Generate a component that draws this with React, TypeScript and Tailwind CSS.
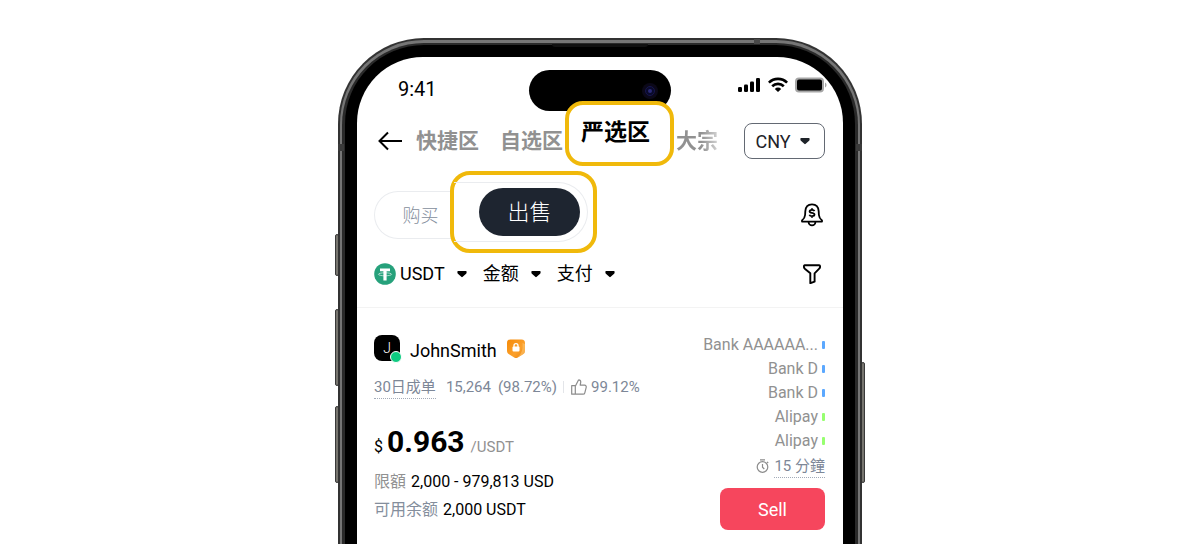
import React, { useState } from 'react';

const payments = [
  { name: 'Bank AAAAAA...', bar: 'bg-[#5ba8ff]' },
  { name: 'Bank D', bar: 'bg-[#5ba8ff]' },
  { name: 'Bank D', bar: 'bg-[#5ba8ff]' },
  { name: 'Alipay', bar: 'bg-[#97ff70]' },
  { name: 'Alipay', bar: 'bg-[#97ff70]' },
];

function Caret() {
  return (
    <svg width="10" height="8" viewBox="0 0 10 8" fill="currentColor" aria-hidden="true">
      <path d="M1.200 1h7.600c.6 0 .8.500.8 1v.6c0 .5-.2.800-.5 1.100L5.700 6.800a1 1 0 0 1-1.400 0L.9 3.700C.6 3.400.4 3.100.4 2.600V2c0-.5.2-1 .8-1z" />
    </svg>
  );
}

function StatusBar() {
  return (
    <div className="flex h-16 items-center justify-between pl-[41px] pr-4">
      <span className="text-[20px] leading-6">9:41</span>
      <div className="flex items-center gap-[7px] pb-2">
        <svg width="23" height="16" viewBox="0 0 23 16">
          <rect x="0" y="10" width="4" height="5" rx="1.200" />
          <rect x="6" y="7.500" width="4" height="7.500" rx="1.200" />
          <rect x="12" y="4.500" width="4" height="10.500" rx="1.200" />
          <rect x="18" y="1" width="4" height="14" rx="1.200" />
        </svg>
        <svg width="20" height="16" viewBox="0 0 20 16" fill="none" stroke="#000" strokeWidth="2.600">
          <path d="M.9 5.600a13 13 0 0 1 18.200 0" />
          <path d="M4.200 9.200a8.300 8.300 0 0 1 11.600 0" />
          <path d="M10 15 6.800 11.900a4.600 4.600 0 0 1 6.400 0z" fill="#000" stroke="none" />
        </svg>
        <svg width="32" height="16" viewBox="0 0 32 16">
          <rect x="1" y="1.500" width="27" height="13" rx="3" fill="#000" stroke="#a6a6a6" strokeWidth="2" />
          <path d="M30 5.500c2 .8 2 4.200 0 5z" fill="#a6a6a6" />
        </svg>
      </div>
    </div>
  );
}

function Island() {
  return (
    <div className="absolute left-1/2 top-[13px] flex h-[41px] w-[142px] -translate-x-1/2 items-center justify-end rounded-full bg-black pr-[13px]">
      <div className="flex size-4 items-center justify-center rounded-full bg-[#0b0818]">
        <div className="flex size-[10px] items-center justify-center rounded-full border border-[#17164d] bg-[#0a0a2a]">
          <div className="size-1 rounded-full bg-[#2a2a78]" />
        </div>
      </div>
    </div>
  );
}

function ZoneTabs() {
  const tab = 'shrink-0 text-[21px] leading-8 font-bold text-[#919191]';
  return (
    <div className="flex h-10 items-center pl-[17px] pr-[18px]">
      <button aria-label="Back" className="ml-1">
        <svg width="24" height="20" viewBox="0 0 24 20" fill="none" stroke="#000" strokeWidth="2">
          <path d="M24 10H1.500M10 1.500 1.500 10l8.500 8.500" />
        </svg>
      </button>
      <nav className="ml-[14px] flex items-center">
        <button className={`${tab} mr-[21px]`}>快捷区</button>
        <button className={tab}>自选区</button>
        <div className="relative mx-[2px] h-8 w-[109px]">
          <button className="absolute inset-x-0 -top-6 z-10 h-[65px] rounded-[18px] border-4 border-[#f0b90b] bg-white pr-2 text-[23px] font-bold">
            严选区
          </button>
        </div>
        <button className={`${tab} bg-linear-to-r from-[#919191] from-60% to-[#d4d4d4] bg-clip-text text-transparent`}>大宗</button>
      </nav>
      <button className="ml-auto flex h-9 w-[81px] items-center justify-center gap-[9px] rounded-lg border border-[#636973] pr-1 text-[18px] text-[#1e2329]">
        CNY
        <Caret />
      </button>
    </div>
  );
}

function SideSwitch({ side, setSide }: { side: string; setSide: (s: string) => void }) {
  return (
    <div className="mt-[30px] flex items-center justify-between pl-[17px] pr-[18px]">
      <div className="relative h-12 w-[213px]">
        <button
          className="h-12 w-[120px] rounded-l-full border border-r-0 border-[#eaecef] pl-3 pr-10 text-[18px] font-light text-[#848e9c]"
          onClick={() => setSide('buy')}
        >
          购买
        </button>
        {/* highlighted option */}
        <div className="absolute -top-5 left-[76px] flex h-[82px] w-[147px] items-center rounded-[20px] border-4 border-[#f0b90b] bg-white pr-[5px]">
          <div className="flex h-[60px] flex-1 items-center justify-end rounded-r-full border border-l-0 border-[#eaecef] pr-[7px]">
            <button
              className="h-12 w-[101px] rounded-full bg-[#1e2530] text-[22px] font-light text-white"
              aria-pressed={side === 'sell'}
              onClick={() => setSide('sell')}
            >
              出售
            </button>
          </div>
        </div>
      </div>
      <button aria-label="Price alerts" className="mr-[2px]">
        <svg width="22" height="24" viewBox="0 0 22 24" fill="none" stroke="#000" strokeWidth="1.800" strokeLinejoin="round">
          <path d="M1 17.400c1.900-1.500 2.900-3 3.100-5.400l.2-3.600C4.500 4 7 1.300 11 1.300s6.500 2.700 6.700 7.100l.2 3.600c.2 2.400 1.200 3.900 3.100 5.400v1.200H1z" />
          <path d="M7.600 19a3.400 3.400 0 0 0 6.800 0" />
          <path d="M13.500 8.200C13.100 7.200 12.200 6.800 11 6.800c-1.400 0-2.400.6-2.400 1.600 0 2.200 4.900.9 4.900 3.200 0 1-1 1.600-2.500 1.600-1.200 0-2.200-.4-2.600-1.500M11 5.200v1.600m0 6.400v1.600" />
        </svg>
      </button>
    </div>
  );
}

function Filters() {
  const filter = 'flex items-center text-[18px] leading-7';
  return (
    <div className="mt-[21px] flex h-12 items-start justify-between border-b border-[#f3f3f3] pl-[17px] pr-[18px]">
      <div className="flex items-center gap-4">
        <button className={`${filter} gap-3`}>
          <span className="flex items-center gap-1">
            <svg width="22" height="22" viewBox="0 0 22 22">
              <circle cx="11" cy="11" r="10.800" fill="#26a17b" />
              <ellipse cx="11" cy="11.300" rx="6.600" ry="1.500" fill="none" stroke="#fff" strokeWidth=".6" />
              <path d="M6 5.600h10v2.600h-3.400v9.300H9.400V8.200H6z" fill="#fff" />
            </svg>
            USDT
          </span>
          <Caret />
        </button>
        <button className={`${filter} gap-3`}>
          金额
          <Caret />
        </button>
        <button className={`${filter} gap-3`}>
          支付
          <Caret />
        </button>
      </div>
      <button aria-label="Filter" className="mr-1 flex h-7 items-center">
        <svg width="18" height="20" viewBox="0 0 18 20" fill="none" stroke="#000" strokeWidth="1.900" strokeLinejoin="round">
          <path d="M1.800 1.300h14.400c.7 0 .9.600.9 1.300 0 1-.3 1.500-.9 2.100l-4.600 4.600v8.400l-4.300 1.500V9.300L1.800 4.700C1.200 4.100.9 3.600.9 2.600c0-.7.200-1.300.9-1.300z" />
        </svg>
      </button>
    </div>
  );
}

function Offer() {
  return (
    <div className="flex justify-between pl-[17px] pr-[18px] pt-6">
      <div>
        <div className="flex h-8 items-center gap-[10px]">
          <div className="relative flex size-[26px] items-center justify-center rounded-lg bg-black text-sm font-light text-white">
            J
            <span className="absolute -bottom-[2px] -right-[2px] size-3 rounded-full border border-white bg-[#0ecb81]" />
          </div>
          <span className="pt-1 text-[18px]">JohnSmith</span>
          <svg width="18" height="19" viewBox="0 0 18 19">
            <defs>
              <linearGradient id="badge" x1="0" y1="0" x2="1" y2="1">
                <stop offset="0" stopColor="#f58a07" />
                <stop offset=".6" stopColor="#fba02c" />
                <stop offset="1" stopColor="#e8820c" />
              </linearGradient>
            </defs>
            <path d="M3.500.5h11C17 .5 18 1.800 18 4v7.500c0 2-.7 3-2.400 4l-4.800 2.900c-1.300.7-2.300.7-3.600 0l-4.800-2.900C.7 14.500 0 13.500 0 11.500V4C0 1.800 1 .5 3.500.5z" fill="url(#badge)" />
            <path d="M18 5v6.500c0 2-.7 3-2.400 4l-4.800 2.900C15 14 16 10 15.500 4z" fill="#ffc670" opacity=".6" />
            <rect x="5.500" y="7.500" width="7" height="5" rx="1" fill="#fff" />
            <path d="M7 8V6.700a2 2 0 0 1 4 0V8" fill="none" stroke="#fff" strokeWidth="1.300" />
          </svg>
        </div>

        <div className="mt-3 flex h-[22px] items-center text-[15px] text-[#7d8797]">
          <span className="border-b border-dotted border-[#a3abb8] leading-[22px]">30日成单</span>
          <span className="ml-[10px]">15,264</span>
          <span className="ml-[7px]">(98.72%)</span>
          <span className="ml-[6px] h-3 w-px bg-[#e3e5e9]" />
          <svg className="ml-[7px]" width="16" height="16" viewBox="0 0 16 16" fill="none" stroke="#8c8c8c" strokeWidth="1.200" strokeLinejoin="round">
            <path d="M.7 6.700h3.600v8.500H.7zM4.300 7.300 7.500 1c1.500-.2 2.400.8 2.200 2.300l-.5 2.900h4.400c1.100 0 1.900 1 1.600 2.100l-1.400 5.500c-.2.900-.9 1.400-1.800 1.400H4.300" />
          </svg>
          <span className="ml-1">99.12%</span>
        </div>

        <div className="mt-6 flex h-10 items-baseline leading-10">
          <span className="text-base">$</span>
          <span className="ml-1 text-[30px] font-bold">0.963</span>
          <span className="ml-[6px] text-[15px] text-[#919191]">/USDT</span>
        </div>

        <dl className="mt-[6px] text-base leading-[28px]">
          <div className="flex gap-[5px]">
            <dt className="text-[#919191]">限額</dt>
            <dd>2,000 - 979,813 USD</dd>
          </div>
          <div className="flex gap-[5px]">
            <dt className="text-[#848e9c]">可用余额</dt>
            <dd>2,000 USDT</dd>
          </div>
        </dl>
      </div>

      <div className="flex flex-col items-end text-base text-[#919191]">
        <ul className="pt-px">
          {payments.map((p, i) => (
            <li key={i} className="flex h-6 items-center justify-end gap-1">
              {p.name}
              <span className={`h-2 w-[3px] rounded-[1px] ${p.bar}`} />
            </li>
          ))}
        </ul>
        <div className="flex h-[26px] items-center gap-[5px] text-[15px] text-[#7d8797]">
          <svg width="13" height="14" viewBox="0 0 13 14" fill="none" stroke="#8c8c8c" strokeWidth="1.200">
            <circle cx="6.500" cy="8" r="5.300" />
            <path d="M4 .8h5M6.500 5v3.300L8.300 10M11 2.800l1.200 1.200" />
          </svg>
          <span className="border-b border-dotted border-[#a3abb8] leading-[22px]">15 分鐘</span>
        </div>
        <button className="mt-[9px] h-[42px] w-[105px] rounded-lg bg-[#f6465d] text-[18px] text-white">Sell</button>
      </div>
    </div>
  );
}

function SideKeys() {
  const key = 'absolute w-1 rounded-[2px] border border-[#3a3a3a] bg-[#77756f]';
  return (
    <>
      <div className={`${key} -left-[3px] top-[196px] h-[42px]`} />
      <div className={`${key} -left-[3px] top-[271px] h-[77px]`} />
      <div className={`${key} -left-[3px] top-[368px] h-[77px]`} />
      <div className={`${key} -right-[3px] top-[324px] h-[121px]`} />
    </>
  );
}

export default function App() {
  const [side, setSide] = useState('sell');

  return (
    <div className="flex min-h-screen justify-center overflow-hidden bg-white pt-[38px] font-[Roboto,'Noto_Sans_CJK_SC',sans-serif] text-black">
      <div className="relative flex w-full max-w-[524px]">
        <SideKeys />
        {/* metal frame, then the black bezel */}
        <div className="relative flex flex-1 rounded-t-[86px] bg-[#333] px-[2px] pt-[2px]">
          <div className="flex flex-1 rounded-t-[84px] bg-[#767676] px-[2px] pt-[3px]">
            <div className="flex flex-1 rounded-t-[82px] bg-[#2a2a2a] px-[3px] pt-[2px]">
              <div className="flex flex-1 rounded-t-[79px] bg-black px-3 pt-3">
                <main className="relative flex-1 rounded-t-[66px] bg-white pb-3">
                  <Island />
                  <StatusBar />
                  <ZoneTabs />
                  <SideSwitch side={side} setSide={setSide} />
                  <Filters />
                  <Offer />
                </main>
              </div>
            </div>
          </div>
          {/* antenna lines */}
          <span className="absolute left-0 top-[106px] h-[7px] w-[6px] bg-[#3b3b3b]" />
          <span className="absolute right-0 top-[106px] h-[7px] w-[6px] bg-[#3b3b3b]" />
          <span className="absolute right-[102px] top-px h-[5px] w-[6px] bg-[#4a4a4a]" />
          <span className="absolute inset-x-[214px] top-[6px] h-[3px] rounded-b-sm bg-[#111]" />
        </div>
      </div>
    </div>
  );
}
